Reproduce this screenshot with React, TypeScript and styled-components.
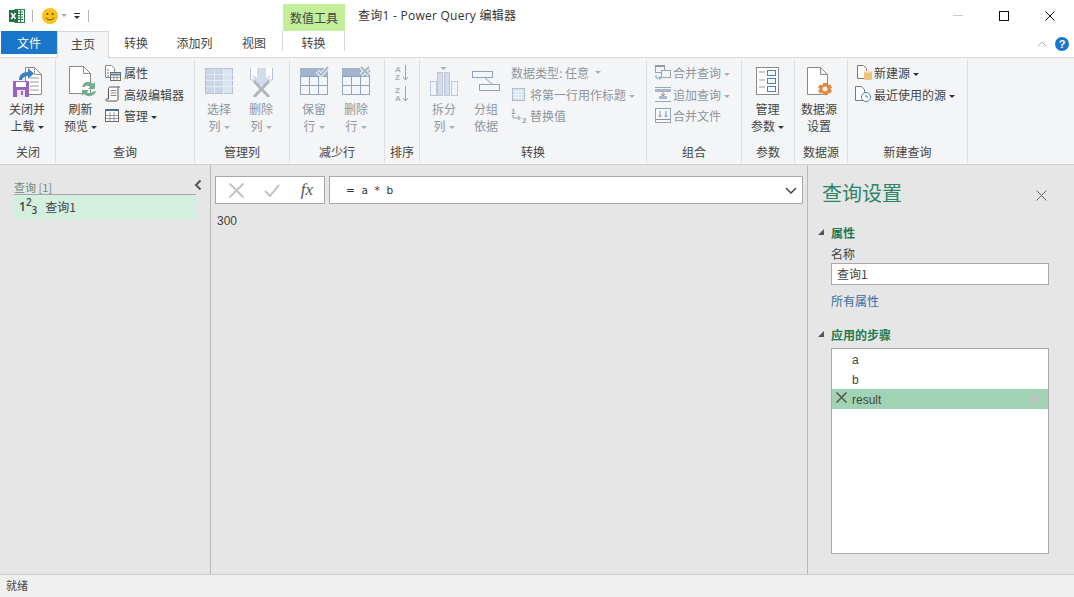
import React from 'react';
import styled, { createGlobalStyle } from 'styled-components';

const GlobalStyle = createGlobalStyle`
  html, body { margin: 0; padding: 0; height: 100%; overflow: hidden; background: #fff; }
  #root { height: 100%; }
  * { box-sizing: border-box; }
`;

const FONT = `"Noto Sans CJK SC", "Liberation Sans", sans-serif`;

const Window = styled.div`
  width: 1074px;
  height: 597px;
  display: flex;
  flex-direction: column;
  font-family: ${FONT};
  font-size: 12px;
  color: #444;
  background: #fff;
  overflow: hidden;
`;

/* ---------- title bar ---------- */
const TitleBar = styled.div`
  height: 31px;
  display: flex;
  align-items: flex-end;
  flex: none;
`;
const QuickAccess = styled.div`
  width: 283px;
  height: 31px;
  display: flex;
  align-items: center;
  padding-left: 9px;
  flex: none;
`;
const QuickSep = styled.div<{ $left: number }>`
  width: 1px;
  height: 12px;
  background: #b5b5b5;
  margin-left: ${p => p.$left}px;
`;
const QuickGap = styled.span<{ $w: number }>`
  width: ${p => p.$w}px;
  flex: none;
`;
const ContextHead = styled.div`
  width: 62px;
  height: 27px;
  background: #c3ef9b;
  color: #444;
  display: flex;
  align-items: center;
  justify-content: center;
  flex: none;
`;
const WindowTitle = styled.div`
  height: 31px;
  line-height: 31px;
  margin-left: 13px;
  flex: 1;
  color: #333;
  white-space: nowrap;
  letter-spacing: 0.25px;
  font-family: "Open Sans", "Noto Sans CJK SC", sans-serif;
`;
const WindowButtons = styled.div`
  display: flex;
  height: 31px;
  padding-right: 1px;
`;
const WindowButton = styled.div`
  width: 46px;
  height: 31px;
  display: flex;
  align-items: center;
  justify-content: center;
`;

/* ---------- tabs ---------- */
const TabRow = styled.div`
  height: 26px;
  display: flex;
  align-items: flex-start;
  flex: none;
  padding-left: 1px;
  position: relative;
`;
const FileTab = styled.div`
  width: 56px;
  height: 23px;
  background: #1a76c9;
  color: #fff;
  display: flex;
  align-items: center;
  justify-content: center;
  flex: none;
`;
const Tab = styled.div<{ $w: number; $active?: boolean; $context?: boolean }>`
  width: ${p => p.$w}px;
  height: ${p => (p.$active ? 27 : p.$context ? 20 : 26)}px;
  line-height: 24px;
  text-align: center;
  color: #444;
  flex: none;
  background: ${p => (p.$active ? '#f3f5f7' : 'transparent')};
  border-top: ${p => (p.$active ? '1px solid #d6d6d6' : '0')};
  border-left: ${p => (p.$active || p.$context ? '1px solid #d6d6d6' : '0')};
  border-right: ${p => (p.$active || p.$context ? '1px solid #d6d6d6' : '0')};
  position: relative;
  z-index: 1;
`;
const TabSpacer = styled.div`
  flex: 1;
`;
const TabTools = styled.div`
  display: flex;
  align-items: center;
  gap: 8px;
  height: 26px;
  padding-right: 5px;
`;

/* ---------- ribbon ---------- */
const Ribbon = styled.div`
  height: 108px;
  flex: none;
  display: flex;
  background: #f3f5f7;
  border-top: 1px solid #d6d6d6;
  border-bottom: 1px solid #d3d3d3;
  padding: 2px 0 1px 1px;
`;
const Group = styled.div<{ $w: number }>`
  width: ${p => p.$w}px;
  flex: none;
  border-right: 1px solid #dcdfe3;
  display: flex;
  flex-direction: column;
`;
const GroupBody = styled.div`
  flex: 1;
  display: flex;
  min-height: 0;
`;
const GroupLabel = styled.div`
  height: 20px;
  line-height: 17px;
  text-align: center;
  color: #444;
  flex: none;
`;
const LargeButton = styled.div<{ $w: number; $off?: boolean }>`
  width: ${p => p.$w}px;
  flex: none;
  display: flex;
  flex-direction: column;
  align-items: center;
  color: ${p => (p.$off ? '#8f959c' : '#444')};
`;
const LargeIcon = styled.div<{ $top?: number; $nudge?: number }>`
  height: 40px;
  padding-top: ${p => p.$top ?? 6}px;
  padding-left: ${p => p.$nudge ?? 0}px;
  display: flex;
  align-items: flex-start;
  justify-content: center;
  flex: none;
`;
const LargeText = styled.div`
  line-height: 17px;
  white-space: nowrap;
  text-align: center;
`;
const SmallColumn = styled.div<{ $w: number; $pad?: number }>`
  width: ${p => p.$w}px;
  flex: none;
  display: flex;
  flex-direction: column;
  padding-top: 2px;
  padding-left: ${p => p.$pad ?? 0}px;
`;
const SmallButton = styled.div<{ $off?: boolean; $gap?: number; $indent?: number }>`
  height: 21.5px;
  display: flex;
  align-items: center;
  gap: ${p => p.$gap ?? 3}px;
  padding-left: ${p => p.$indent ?? 0}px;
  white-space: nowrap;
  color: ${p => (p.$off ? '#8f959c' : '#444')};
`;
const Caret = styled.span<{ $off?: boolean }>`
  display: inline-block;
  width: 0;
  height: 0;
  margin-left: 3px;
  vertical-align: 2px;
  border-left: 3px solid transparent;
  border-right: 3px solid transparent;
  border-top: 3px solid ${p => (p.$off ? '#a9aeb4' : '#333')};
`;
const SortColumn = styled.div`
  flex: 1;
  display: flex;
  flex-direction: column;
  align-items: center;
  padding-top: 5px;
  gap: 5px;
`;

/* ---------- work area ---------- */
const Work = styled.div`
  flex: 1;
  min-height: 0;
  display: flex;
  background: #e6e6e6;
`;
const QueriesPane = styled.div`
  width: 211px;
  flex: none;
  border-right: 1px solid #b9b9b9;
  padding: 15px 14px 0 14px;
  position: relative;
`;
const QueriesHead = styled.div`
  height: 15px;
  line-height: 14px;
  font-size: 11px;
  color: #6d8b7b;
  border-bottom: 1px solid #a6a6a6;
  width: 182px;
`;
const QueryItem = styled.div`
  width: 182px;
  height: 24px;
  background: #d3efe0;
  display: flex;
  align-items: center;
  gap: 8px;
  padding: 0 0 2px 5px;
  color: #444;
`;
const NumType = styled.span`
  font-family: "Open Sans", sans-serif;
  font-size: 12px;
  font-weight: 600;
  color: #444;
  sup, sub { font-size: 10px; line-height: 0; }
`;
const CollapseButton = styled.div`
  position: absolute;
  top: 12px;
  right: 8px;
`;
const Center = styled.div`
  flex: 1;
  min-width: 0;
  border-right: 1px solid #b9b9b9;
  padding: 11px 4px 0 4px;
  display: flex;
  flex-direction: column;
`;
const FormulaBar = styled.div`
  display: flex;
  gap: 4px;
  height: 28px;
  flex: none;
`;
const FormulaTools = styled.div`
  width: 110px;
  flex: none;
  background: #fff;
  border: 1px solid #a9a9a9;
  display: flex;
  align-items: center;
  justify-content: space-between;
  padding: 0 11px 0 13px;
`;
const FxText = styled.span`
  font-family: "Liberation Serif", serif;
  font-style: italic;
  font-size: 17px;
  color: #555;
`;
const FormulaInput = styled.div`
  flex: 1;
  background: #fff;
  border: 1px solid #a9a9a9;
  display: flex;
  align-items: center;
  justify-content: space-between;
  padding: 0 5px 0 16px;
  font-family: "DejaVu Sans", sans-serif;
  font-size: 10.5px;
  color: #333;
  white-space: pre;
`;
const CellValue = styled.div`
  margin: 10px 0 0 2px;
  font-family: "Liberation Sans", sans-serif;
  font-size: 12px;
  color: #444;
`;
const SettingsPane = styled.div`
  width: 266px;
  flex: none;
  padding: 13px 24px 0 14px;
  position: relative;
`;
const SettingsTitle = styled.div`
  font-size: 20px;
  line-height: 30px;
  color: #2a8568;
`;
const SettingsClose = styled.div`
  position: absolute;
  top: 25px;
  right: 27px;
  line-height: 0;
`;
const SectionHead = styled.div<{ $top: number }>`
  margin-top: ${p => p.$top}px;
  display: flex;
  align-items: center;
  height: 18px;
  font-weight: 700;
  color: #1f7a4f;
`;
const SectionMark = styled.span`
  width: 13px;
  flex: none;
  margin-left: -4px;
  display: flex;
  svg { display: block; }
`;
const Indented = styled.div`
  padding-left: 9px;
`;
const FieldLabel = styled.div`
  margin-top: 4px;
  line-height: 18px;
  color: #444;
`;
const NameInput = styled.div`
  width: 218px;
  height: 22px;
  background: #fff;
  border: 1px solid #a9a9a9;
  padding-left: 5px;
  line-height: 20px;
  color: #444;
`;
const AllProps = styled.div`
  margin-top: 7px;
  line-height: 18px;
  color: #3b6ba5;
`;
const StepList = styled.div`
  width: 218px;
  height: 206px;
  margin-top: 5px;
  background: #fff;
  border: 1px solid #a9a9a9;
`;
const StepRow = styled.div<{ $on?: boolean }>`
  height: 20px;
  display: flex;
  align-items: center;
  padding: 1px 0 0 20px;
  position: relative;
  font-family: "Liberation Sans", sans-serif;
  font-size: 12px;
  color: #444;
  background: ${p => (p.$on ? '#9fd3b3' : 'transparent')};
`;
const StepDelete = styled.span`
  position: absolute;
  left: 4px;
  top: 3px;
  line-height: 0;
`;
const StepGear = styled.span`
  position: absolute;
  right: 8px;
  top: 4px;
  line-height: 0;
`;
const StatusBar = styled.div`
  height: 23px;
  flex: none;
  background: #f0f0f0;
  border-top: 1px solid #c9c9c9;
  padding-left: 6px;
  line-height: 21px;
  font-size: 11px;
  color: #444;
`;

/* ---------- drawings ---------- */
const LN = '#8fa3bf';
const FILL = '#d3dcea';

const ExcelIcon = () => (
  <svg width="16" height="16" viewBox="0 0 16 16">
    <rect x="6" y="1.500" width="9.500" height="13" fill="#fff" stroke="#2a7a4b" />
    <path d="M9 4h5M9 6.500h5M9 9h5M9 11.500h5M11.500 2v12" stroke="#2a7a4b" />
    <rect x="0" y="2" width="9" height="12" fill="#1f7345" />
    <path d="M2.200 5l4.400 6M6.600 5l-4.400 6" stroke="#fff" strokeWidth="1.500" />
  </svg>
);
const Smile = () => (
  <svg width="16" height="16" viewBox="0 0 16 16">
    <circle cx="8" cy="8" r="8" fill="#f6c21c" />
    <circle cx="5.400" cy="6" r="1" fill="#5f4a00" />
    <circle cx="10.600" cy="6" r="1" fill="#5f4a00" />
    <path d="M4 9.500c1.500 3.200 6.500 3.200 8 0" fill="none" stroke="#5f4a00" />
  </svg>
);
const CustomizeMark = () => (
  <svg width="8" height="8" viewBox="0 0 8 8">
    <path d="M1 1.500h6" stroke="#333" />
    <path d="M1 4h6L4 7z" fill="#333" />
  </svg>
);
const CloseLoadIcon = () => (
  <svg width="29" height="31" viewBox="0 0 29 31">
    <path d="M12.500 1.500h9l7 7v20h-16z" fill="#fff" stroke="#8a8a8a" />
    <path d="M21.500 1.500v7h7M17 12h9M17 16h9M17 20h9M17 24h9" fill="none" stroke="#9a9a9a" />
    <path d="M6 14c0-5 3-8 9-8V2l6 5.500-6 5.500V10c-3 0-5 1-6 4z" fill="#3f7fc4" />
    <rect x="0" y="15" width="16" height="16" fill="#9b63bd" />
    <rect x="3" y="16" width="10" height="5" fill="#fff" />
    <rect x="4" y="24" width="8" height="7" fill="#f1e6f6" />
    <rect x="8" y="25" width="2" height="4" fill="#9b63bd" />
  </svg>
);
const RefreshIcon = () => (
  <svg width="27" height="31" viewBox="0 0 27 31">
    <path d="M.500.500h14l7 7v20h-21z" fill="#fff" stroke="#8a8a8a" />
    <path d="M14.500.500v7h7" fill="none" stroke="#8a8a8a" />
    <path d="M13 21c1-5 7-7 11-3l2-2v7h-7l2-2c-2-2-4-2-5 0z" fill="#74ad93" />
    <path d="M27 25c-1 5-8 7-12 3l-2 2v-6h7l-2 2c2 2 4 2 5 0z" fill="#74ad93" />
  </svg>
);
const PropsIcon = () => (
  <svg width="16" height="16" viewBox="0 0 16 16">
    <path d="M.500.500h6l3 3v9h-9z" fill="#fff" stroke="#8a8a8a" />
    <path d="M2 5h2M2 8h2M2 11h2" stroke="#777" />
    <rect x="5.500" y="7.500" width="10" height="8" fill="#fff" stroke="#6d6d6d" />
    <path d="M5.500 9.500h10" stroke="#5b80ad" strokeWidth="2" />
    <path d="M9 10v5M12 10v5M6 12.500h9" stroke="#999" />
  </svg>
);
const EditorIcon = () => (
  <svg width="16" height="16" viewBox="0 0 16 16">
    <path d="M3.500 13V2.500c0-1 1-1.500 2-1.500h9c-1 0-1.500.500-1.500 1.500V13c0 1.500-1 2-2 2H1.500c-1 0-1-2 0-2z" fill="#fff" stroke="#555" />
    <path d="M5.500 4.500h6M5.500 7h6M5.500 9.500h6" stroke="#888" />
  </svg>
);
const TableIcon = () => (
  <svg width="14" height="13" viewBox="0 0 14 13">
    <rect x=".5" y=".5" width="13" height="12" fill="#fff" stroke="#6d6d6d" />
    <rect x="0" y="0" width="14" height="2" fill="#3f6fa8" />
    <path d="M5 3v9M9 3v9M1 6.500h12M1 9.500h12" stroke="#9a9a9a" />
  </svg>
);
const ChooseColIcon = () => (
  <svg width="28" height="26" viewBox="0 0 28 26">
    <rect x=".5" y=".5" width="27" height="25" fill="#dde4ef" stroke="#b5c2d6" />
    <rect x="1" y="1" width="17" height="24" fill="#ccd6e6" />
    <path d="M9.500 1v25M18.500 1v25M1 6.500h27M1 12.500h27M1 18.500h27" stroke="#e6ebf3" />
  </svg>
);
const RemoveColIcon = () => (
  <svg width="23" height="29" viewBox="0 0 23 29">
    <path d="M.5 0v12h22V0" fill="#fff" stroke="#b5c2d6" />
    <rect x="7" y="0" width="9" height="17" fill="#d3dcea" />
    <path d="M3 8l8.500 8L20 8" fill="none" stroke="#d3dcea" strokeWidth="2" />
    <path d="M4 13l15 16M19 13L4 29" stroke="#b0b6bd" strokeWidth="3" />
  </svg>
);
const RowsIcon = ({ mark }: { mark: 'check' | 'x' }) => (
  <svg width="29" height="30" viewBox="0 0 29 30">
    <rect x="0" y="2" width="28" height="8" fill="#a3b3cc" />
    <rect x=".5" y="10.500" width="27" height="18" fill="#f3f6fb" stroke={LN} />
    <path d="M9.500 11v17M18.500 11v17M1 19.500h26" stroke={LN} />
    {mark === 'check' ? (
      <g fill="none">
        <path d="M17 5l4 4 7-8" stroke="#f3f5f7" strokeWidth="4" />
        <path d="M17 5l4 4 7-8" stroke="#aab6c4" strokeWidth="2" />
      </g>
    ) : (
      <g fill="none">
        <path d="M19 1l8 8M27 1l-8 8" stroke="#f3f5f7" strokeWidth="4" />
        <path d="M19 1l8 8M27 1l-8 8" stroke="#aab6c4" strokeWidth="2" />
      </g>
    )}
  </svg>
);
const SortIcon = ({ top, bottom }: { top: string; bottom: string }) => (
  <svg width="14" height="16" viewBox="0 0 14 16">
    <text x="0" y="7" fontSize="8" fontFamily="Liberation Sans" fontWeight="700" fill="#a3afc0">{top}</text>
    <text x="0" y="15" fontSize="8" fontFamily="Liberation Sans" fontWeight="700" fill="#a3afc0">{bottom}</text>
    <path d="M10.500 0v15M8 12l2.500 3 2.500-3" fill="none" stroke="#98a3b3" />
  </svg>
);
const SplitIcon = () => (
  <svg width="28" height="29" viewBox="0 0 28 29">
    <rect x=".5" y="14.500" width="6" height="14" fill="#f1f4fa" stroke="#bcc7d9" />
    <rect x="7.500" y="5.500" width="5" height="23" fill="#d3dcea" stroke="#bcc7d9" />
    <rect x="14.500" y="5.500" width="5" height="23" fill="#d3dcea" stroke="#bcc7d9" />
    <rect x="21.500" y="14.500" width="6" height="14" fill="#f1f4fa" stroke="#bcc7d9" />
    <path d="M10.500 0h6l-3 3z" fill="#a3afc0" />
  </svg>
);
const GroupByIcon = () => (
  <svg width="28" height="20" viewBox="0 0 28 20">
    <rect x=".5" y=".5" width="20" height="6" fill="#f3f6fb" stroke={LN} />
    <rect x="7.500" y="13.500" width="20" height="6" fill="#f3f6fb" stroke={LN} />
    <path d="M13 7l7 6" stroke={LN} />
  </svg>
);
const HeaderRowIcon = () => (
  <svg width="13" height="13" viewBox="0 0 13 13">
    <rect width="13" height="13" fill={FILL} stroke={LN} />
    <path d="M3.500 1v11M6.500 1v11M9.500 1v11M1 3.500h11M1 6.500h11M1 9.500h11" stroke="#f3f6fb" />
  </svg>
);
const ReplaceIcon = () => (
  <svg width="17" height="17" viewBox="0 0 17 17">
    <text x="0" y="7" fontSize="8" fontFamily="Liberation Sans" fontWeight="700" fill="#8fa0b8">1</text>
    <text x="11" y="16" fontSize="8" fontFamily="Liberation Sans" fontWeight="700" fill="#8fa0b8">2</text>
    <path d="M2 8v3h7M7 9l2.500 2L7 13" fill="none" stroke="#8fa0b8" />
  </svg>
);
const MergeQueryIcon = () => (
  <svg width="16" height="15" viewBox="0 0 16 15">
    <rect x=".5" y=".5" width="9" height="7" fill="#f3f6fb" stroke="#99a2ad" />
    <rect x="0" y="0" width="10" height="2" fill="#8f9aa6" />
    <rect x="6.500" y="5.500" width="9" height="7" fill="#f3f6fb" stroke="#99a2ad" />
    <path d="M1 10v3h4M4 11.500l2 1.500-2 1.500" fill="none" stroke="#7b9ec4" />
  </svg>
);
const AppendIcon = () => (
  <svg width="16" height="15" viewBox="0 0 16 15">
    <path d="M0 .5h16M0 14.500h16" stroke="#99a7ba" />
    <rect x="0" y="2" width="16" height="3" fill="#aab7c9" />
    <rect x="4" y="9" width="8" height="3" fill="#aab7c9" />
    <path d="M8 5v4M6 7l2 2 2-2" fill="none" stroke="#7f8ea3" />
  </svg>
);
const MergeFileIcon = () => (
  <svg width="16" height="15" viewBox="0 0 16 15">
    <rect x=".5" y=".5" width="15" height="14" fill="#f6f8fb" stroke={LN} />
    <path d="M1 11.500h14M5 3v6M3.500 7.500L5 9l1.500-1.500M11 3v6M9.500 7.500L11 9l1.500-1.500" fill="none" stroke="#8592a3" />
  </svg>
);
const ManageParamsIcon = () => (
  <svg width="24" height="28" viewBox="0 0 24 28">
    <rect x=".5" y=".5" width="22" height="27" fill="#fff" stroke="#8a8a8a" />
    <path d="M3 5h6M3 13h6M3 20h6" stroke="#999" />
    <rect x="11.500" y="3.500" width="8" height="5" fill="#fff" stroke="#3f7fc4" />
    <rect x="11.500" y="11.500" width="8" height="5" fill="#fff" stroke="#3f7fc4" />
    <rect x="11.500" y="19.500" width="8" height="5" fill="#fff" stroke="#3f7fc4" />
  </svg>
);
const SourceSettingsIcon = () => (
  <svg width="27" height="30" viewBox="0 0 27 30">
    <path d="M.500.500h13l7 7v20h-20zM13.500.500v7h7" fill="#fff" stroke="#8a8a8a" />
    <g fill="#e6853b" transform="translate(0 6)">
      <path d="M16 10h4l.500 2.500 2.500-1 2 3-2 1.500 2 1.500-2 3-2.500-1-.500 2.500h-4l-.500-2.500-2.500 1-2-3 2-1.500-2-1.500 2-3 2.500 1z" />
    </g>
    <circle cx="18" cy="22" r="2.500" fill="#f3f5f7" />
  </svg>
);
const NewSourceIcon = () => (
  <svg width="15" height="15" viewBox="0 0 15 15">
    <path d="M.500.500h6l3 3v10h-9z" fill="#fff" stroke="#777" />
    <rect x="7" y="6" width="8" height="9" rx="1.500" fill="#edc27e" />
    <ellipse cx="11" cy="6.500" rx="4" ry="1.200" fill="#f6e2bd" />
  </svg>
);
const RecentSourceIcon = () => (
  <svg width="16" height="16" viewBox="0 0 16 16">
    <path d="M.500.500h6l3 3v11h-9z" fill="#fff" stroke="#777" />
    <circle cx="11" cy="11" r="4.500" fill="#fff" stroke="#4f82b8" />
    <path d="M11 8.500V11h2" fill="none" stroke="#4f82b8" />
  </svg>
);
const Cross = ({ size, color, width = 1 }: { size: number; color: string; width?: number }) => (
  <svg width={size} height={size} viewBox={`0 0 ${size} ${size}`}>
    <path d={`M.5 .5L${size - 0.5} ${size - 0.5}M${size - 0.5} .5L.5 ${size - 0.5}`} stroke={color} strokeWidth={width} />
  </svg>
);
const Gear = () => (
  <svg width="12" height="12" viewBox="0 0 12 12">
    <path d="M6 0l1.200 2 2.300-.7.500 2.300L12 5l-1 1 1 1-2 1.400-.5 2.300L7.200 10 6 12 4.800 10l-2.300.7L2 8.400 0 7l1-1-1-1 2-1.400.5-2.300L4.800 2z" fill="#bcc6c0" />
    <circle cx="6" cy="6" r="1.800" fill="#9fd3b3" />
  </svg>
);
const TriangleMark = () => (
  <svg width="6" height="6" viewBox="0 0 6 6">
    <path d="M6 0v6H0z" fill="#555" />
  </svg>
);

export default function App() {
  return (
    <Window>
      <GlobalStyle />
      <TitleBar>
        <QuickAccess>
          <ExcelIcon />
          <QuickSep $left={7} />
          <QuickGap $w={9} />
          <Smile />
          <Caret $off />
          <QuickGap $w={6} />
          <CustomizeMark />
          <QuickSep $left={7} />
        </QuickAccess>
        <ContextHead>数值工具</ContextHead>
        <WindowTitle>查询1 - Power Query 编辑器</WindowTitle>
        <WindowButtons>
          <WindowButton>
            <svg width="10" height="1"><rect width="10" height="1" fill="#ccc" /></svg>
          </WindowButton>
          <WindowButton>
            <svg width="10" height="10"><rect x=".5" y=".5" width="9" height="9" fill="none" stroke="#111" /></svg>
          </WindowButton>
          <WindowButton>
            <Cross size={10} color="#111" />
          </WindowButton>
        </WindowButtons>
      </TitleBar>
      <TabRow>
        <FileTab>文件</FileTab>
        <Tab $w={52} $active>主页</Tab>
        <Tab $w={54}>转换</Tab>
        <Tab $w={63}>添加列</Tab>
        <Tab $w={56}>视图</Tab>
        <Tab $w={63} $context>转换</Tab>
        <TabSpacer />
        <TabTools>
          <svg width="10" height="6"><path d="M.5 5.500L5 1l4.500 4.500" fill="none" stroke="#b5b5b5" /></svg>
          <svg width="14" height="14" viewBox="0 0 14 14">
            <circle cx="7" cy="7" r="7" fill="#1a76c9" />
            <text x="7" y="11" fontSize="11" fontWeight="700" fontFamily="Liberation Sans" fill="#fff" textAnchor="middle">?</text>
          </svg>
        </TabTools>
      </TabRow>
      <Ribbon>
        <Group $w={55}>
          <GroupBody>
            <LargeButton $w={52}>
              <LargeIcon><CloseLoadIcon /></LargeIcon>
              <LargeText>关闭并</LargeText>
              <LargeText>上载<Caret /></LargeText>
            </LargeButton>
          </GroupBody>
          <GroupLabel>关闭</GroupLabel>
        </Group>
        <Group $w={139}>
          <GroupBody>
            <LargeButton $w={49}>
              <LargeIcon $nudge={4}><RefreshIcon /></LargeIcon>
              <LargeText>刷新</LargeText>
              <LargeText>预览<Caret /></LargeText>
            </LargeButton>
            <SmallColumn $w={88}>
              <SmallButton><PropsIcon />属性</SmallButton>
              <SmallButton><EditorIcon />高级编辑器</SmallButton>
              <SmallButton $gap={5}><TableIcon /><span>管理<Caret /></span></SmallButton>
            </SmallColumn>
          </GroupBody>
          <GroupLabel>查询</GroupLabel>
        </Group>
        <Group $w={95}>
          <GroupBody>
            <LargeButton $w={48} $off>
              <LargeIcon $top={8}><ChooseColIcon /></LargeIcon>
              <LargeText>选择</LargeText>
              <LargeText>列<Caret $off /></LargeText>
            </LargeButton>
            <LargeButton $w={36} $off>
              <LargeIcon $top={8}><RemoveColIcon /></LargeIcon>
              <LargeText>删除</LargeText>
              <LargeText>列<Caret $off /></LargeText>
            </LargeButton>
          </GroupBody>
          <GroupLabel>管理列</GroupLabel>
        </Group>
        <Group $w={95}>
          <GroupBody>
            <LargeButton $w={48} $off>
              <LargeIcon><RowsIcon mark="check" /></LargeIcon>
              <LargeText>保留</LargeText>
              <LargeText>行<Caret $off /></LargeText>
            </LargeButton>
            <LargeButton $w={36} $off>
              <LargeIcon><RowsIcon mark="x" /></LargeIcon>
              <LargeText>删除</LargeText>
              <LargeText>行<Caret $off /></LargeText>
            </LargeButton>
          </GroupBody>
          <GroupLabel>减少行</GroupLabel>
        </Group>
        <Group $w={35}>
          <GroupBody>
            <SortColumn>
              <SortIcon top="A" bottom="Z" />
              <SortIcon top="Z" bottom="A" />
            </SortColumn>
          </GroupBody>
          <GroupLabel>排序</GroupLabel>
        </Group>
        <Group $w={227}>
          <GroupBody>
            <LargeButton $w={48} $off>
              <LargeIcon $top={7}><SplitIcon /></LargeIcon>
              <LargeText>拆分</LargeText>
              <LargeText>列<Caret $off /></LargeText>
            </LargeButton>
            <LargeButton $w={36} $off>
              <LargeIcon $top={11}><GroupByIcon /></LargeIcon>
              <LargeText>分组</LargeText>
              <LargeText>依据</LargeText>
            </LargeButton>
            <SmallColumn $w={142} $pad={7}>
              <SmallButton $off>数据类型: 任意<Caret $off /></SmallButton>
              <SmallButton $off $gap={5} $indent={1}>
                <HeaderRowIcon />
                <span>将第一行用作标题<Caret $off /></span>
              </SmallButton>
              <SmallButton $off $gap={2}><ReplaceIcon />替换值</SmallButton>
            </SmallColumn>
          </GroupBody>
          <GroupLabel>转换</GroupLabel>
        </Group>
        <Group $w={95}>
          <GroupBody>
            <SmallColumn $w={92} $pad={8}>
              <SmallButton $off $gap={2}><MergeQueryIcon /><span>合并查询<Caret $off /></span></SmallButton>
              <SmallButton $off $gap={2}><AppendIcon /><span>追加查询<Caret $off /></span></SmallButton>
              <SmallButton $off $gap={2}><MergeFileIcon />合并文件</SmallButton>
            </SmallColumn>
          </GroupBody>
          <GroupLabel>组合</GroupLabel>
        </Group>
        <Group $w={53}>
          <GroupBody>
            <LargeButton $w={51}>
              <LargeIcon $top={7}><ManageParamsIcon /></LargeIcon>
              <LargeText>管理</LargeText>
              <LargeText>参数<Caret /></LargeText>
            </LargeButton>
          </GroupBody>
          <GroupLabel>参数</GroupLabel>
        </Group>
        <Group $w={53}>
          <GroupBody>
            <LargeButton $w={48}>
              <LargeIcon $top={7} $nudge={3}><SourceSettingsIcon /></LargeIcon>
              <LargeText>数据源</LargeText>
              <LargeText>设置</LargeText>
            </LargeButton>
          </GroupBody>
          <GroupLabel>数据源</GroupLabel>
        </Group>
        <Group $w={120}>
          <GroupBody>
            <SmallColumn $w={118} $pad={7}>
              <SmallButton $gap={2} $indent={2}><NewSourceIcon /><span>新建源<Caret /></span></SmallButton>
              <SmallButton $gap={3}><RecentSourceIcon /><span>最近使用的源<Caret /></span></SmallButton>
            </SmallColumn>
          </GroupBody>
          <GroupLabel>新建查询</GroupLabel>
        </Group>
      </Ribbon>
      <Work>
        <QueriesPane>
          <QueriesHead>查询 [1]</QueriesHead>
          <QueryItem>
            <NumType>1<sup>2</sup><sub>3</sub></NumType>
            查询1
          </QueryItem>
          <CollapseButton>
            <svg width="8" height="12"><path d="M6.500 1.500L2 6l4.500 4.500" fill="none" stroke="#555" strokeWidth="2" /></svg>
          </CollapseButton>
        </QueriesPane>
        <Center>
          <FormulaBar>
            <FormulaTools>
              <Cross size={15} color="#c4c4c4" width={2} />
              <svg width="16" height="13"><path d="M1 7l5 5 9-11" fill="none" stroke="#c4c4c4" strokeWidth="2" /></svg>
              <FxText>fx</FxText>
            </FormulaTools>
            <FormulaInput>
              <span>=  a  *  b</span>
              <svg width="12" height="7"><path d="M1 1l5 5 5-5" fill="none" stroke="#444" strokeWidth="1.500" /></svg>
            </FormulaInput>
          </FormulaBar>
          <CellValue>300</CellValue>
        </Center>
        <SettingsPane>
          <SettingsTitle>查询设置</SettingsTitle>
          <SettingsClose><Cross size={11} color="#666" /></SettingsClose>
          <SectionHead $top={15}><SectionMark><TriangleMark /></SectionMark>属性</SectionHead>
          <Indented>
            <FieldLabel>名称</FieldLabel>
            <NameInput>查询1</NameInput>
            <AllProps>所有属性</AllProps>
          </Indented>
          <SectionHead $top={15}><SectionMark><TriangleMark /></SectionMark>应用的步骤</SectionHead>
          <Indented>
            <StepList>
              <StepRow>a</StepRow>
              <StepRow>b</StepRow>
              <StepRow $on>
                <StepDelete><Cross size={11} color="#555" width={1.500} /></StepDelete>
                result
                <StepGear><Gear /></StepGear>
              </StepRow>
            </StepList>
          </Indented>
        </SettingsPane>
      </Work>
      <StatusBar>就绪</StatusBar>
    </Window>
  );
}
